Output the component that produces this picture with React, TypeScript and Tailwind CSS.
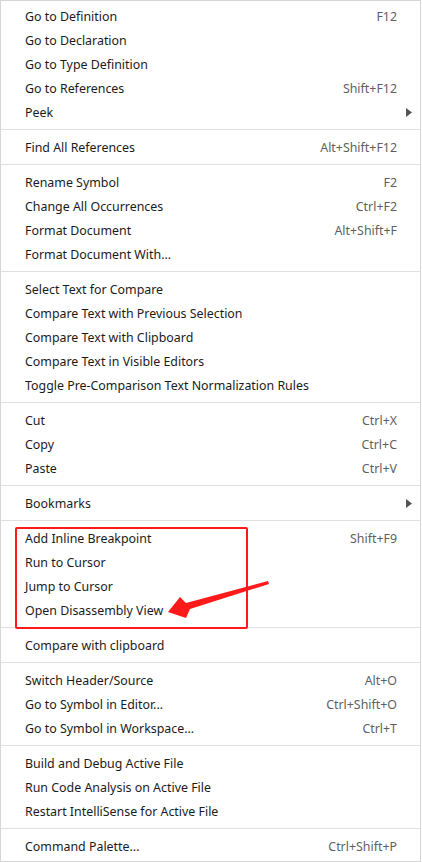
type Item = { label: string; keys?: string; sub?: boolean };

const groups: Item[][] = [
  [
    { label: "Go to Definition", keys: "F12" },
    { label: "Go to Declaration" },
    { label: "Go to Type Definition" },
    { label: "Go to References", keys: "Shift+F12" },
    { label: "Peek", sub: true },
  ],
  [{ label: "Find All References", keys: "Alt+Shift+F12" }],
  [
    { label: "Rename Symbol", keys: "F2" },
    { label: "Change All Occurrences", keys: "Ctrl+F2" },
    { label: "Format Document", keys: "Alt+Shift+F" },
    { label: "Format Document With..." },
  ],
  [
    { label: "Select Text for Compare" },
    { label: "Compare Text with Previous Selection" },
    { label: "Compare Text with Clipboard" },
    { label: "Compare Text in Visible Editors" },
    { label: "Toggle Pre-Comparison Text Normalization Rules" },
  ],
  [
    { label: "Cut", keys: "Ctrl+X" },
    { label: "Copy", keys: "Ctrl+C" },
    { label: "Paste", keys: "Ctrl+V" },
  ],
  [{ label: "Bookmarks", sub: true }],
  [
    { label: "Add Inline Breakpoint", keys: "Shift+F9" },
    { label: "Run to Cursor" },
    { label: "Jump to Cursor" },
    { label: "Open Disassembly View" },
  ],
  [{ label: "Compare with clipboard" }],
  [
    { label: "Switch Header/Source", keys: "Alt+O" },
    { label: "Go to Symbol in Editor...", keys: "Ctrl+Shift+O" },
    { label: "Go to Symbol in Workspace...", keys: "Ctrl+T" },
  ],
  [
    { label: "Build and Debug Active File" },
    { label: "Run Code Analysis on Active File" },
    { label: "Restart IntelliSense for Active File" },
  ],
  [{ label: "Command Palette...", keys: "Ctrl+Shift+P" }],
];

function Row({ item }: { item: Item }) {
  return (
    <div className="relative flex h-6 items-center justify-between pl-[24px] pr-[23px] pt-[2px]">
      <span className="text-[#1b1b1b]">{item.label}</span>
      {item.keys && <span className="text-[#5f5f5f]">{item.keys}</span>}
      {item.sub && (
        <svg
          className="absolute right-[8px] top-[8px]"
          width="6"
          height="9"
          viewBox="0 0 6 9"
        >
          <path d="M0 0 L6 4.5 L0 9 Z" fill="#555" />
        </svg>
      )}
    </div>
  );
}

export default function App() {
  return (
    <div className="relative h-[862px] w-[422px] bg-white">
      <div
        className="relative w-[421px] border border-[#d6d6d6] bg-white py-[3px] text-[12.4px] leading-none"
        style={{ fontFamily: '"Noto Sans", "Microsoft YaHei", sans-serif' }}
      >
        {groups.map((g, i) => (
          <div key={i}>
            {i > 0 && <div className="my-[5px] h-px bg-[#e0e0e0]" />}
            {g.map((item) => (
              <Row key={item.label} item={item} />
            ))}
          </div>
        ))}
      </div>

      {/* annotation */}
      <div className="absolute left-[15px] top-[527px] h-[102px] w-[233px] rounded-[2px] border-2 border-[#ff1a1a]" />
      <svg
        className="absolute left-0 top-0"
        width="422"
        height="862"
        viewBox="0 0 422 862"
      >
        <polygon
          points="168,612 180,597 186,603 268,581 269,584 190,609 186,618"
          fill="#ff1a1a"
        />
      </svg>
    </div>
  );
}
